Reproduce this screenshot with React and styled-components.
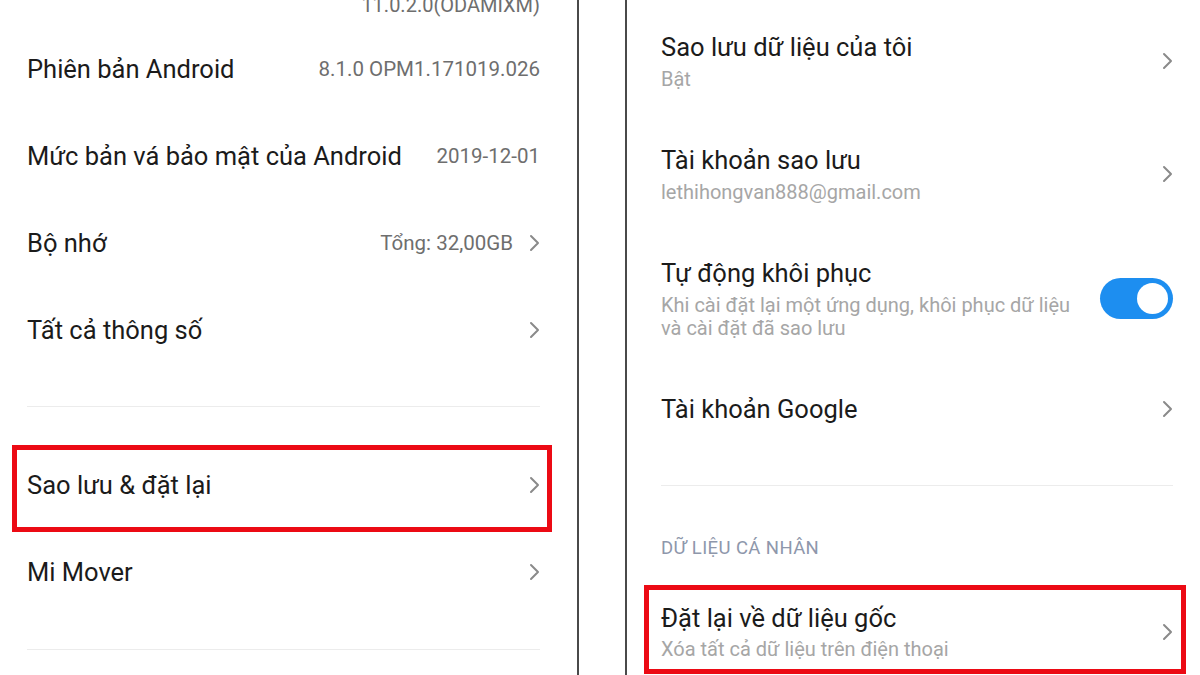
import React from "react";
import styled, { createGlobalStyle } from "styled-components";

const GlobalStyle = createGlobalStyle`
  html, body {
    margin: 0;
    padding: 0;
    background: #ffffff;
  }
  body {
    font-family: Roboto, "Noto Sans", "Liberation Sans", sans-serif;
    -webkit-font-smoothing: antialiased;
  }
`;

const Page = styled.div`
  width: 1200px;
  height: 675px;
  display: flex;
  overflow: hidden;
  background: #fff;
`;

const Screen = styled.section`
  position: relative;
  height: 675px;
  overflow: hidden;
  box-sizing: border-box;
  background: #fff;
  width: ${(p) => p.$width}px;
  border-left: ${(p) => (p.$edge === "left" ? "2px solid #4a4a4a" : "none")};
  border-right: ${(p) => (p.$edge === "right" ? "2px solid #4a4a4a" : "none")};
  padding: ${(p) => p.$pad};
`;

const Gutter = styled.div`
  width: 46px;
  flex: none;
`;

const Stub = styled.div`
  height: 25.5px;
  display: flex;
  justify-content: flex-end;
  align-items: flex-end;
  overflow: hidden;
`;

const StubValue = styled.span`
  font-size: 20px;
  line-height: 22px;
  color: #6e6e6e;
  margin-bottom: 10px;
`;

const Row = styled.div`
  position: relative;
  display: flex;
  align-items: center;
  justify-content: space-between;
  gap: 16px;
  padding: ${(p) => (p.$tall ? "26.75px" : "27.5px")} 0;

  ${(p) =>
    p.$box &&
    `
    &::after {
      content: "";
      position: absolute;
      inset: ${p.$box};
      border: 5px solid #ec0a14;
      pointer-events: none;
    }
  `}
`;

const TextBlock = styled.div`
  display: flex;
  flex-direction: column;
  min-width: 0;
`;

const Title = styled.div`
  font-size: 25.5px;
  line-height: 32px;
  color: #1b1b1b;
  white-space: nowrap;
`;

const Sub = styled.div`
  font-size: 20px;
  line-height: 23px;
  margin-top: 4.5px;
  color: #a6a6a6;
  max-width: ${(p) => (p.$narrow ? "430px" : "none")};
`;

const Trail = styled.div`
  display: flex;
  align-items: center;
  gap: 16px;
  flex: none;
`;

const Value = styled.span`
  font-size: 20.5px;
  color: #6e6e6e;
  white-space: nowrap;
`;

const Separator = styled.hr`
  border: none;
  height: 1px;
  background: #ececec;
  margin: ${(p) => p.$margin};
`;

const SectionLabel = styled.div`
  font-size: 18.5px;
  line-height: 24px;
  color: #8e97ab;
  letter-spacing: 0.4px;
  margin: 0 0 15.5px;
`;

const Toggle = styled.div`
  width: 73px;
  height: 41px;
  border-radius: 21px;
  background: #1d8ef0;
  display: flex;
  align-items: center;
  justify-content: flex-end;
  padding: 0 5px;
  box-sizing: border-box;
  flex: none;
`;

const Knob = styled.div`
  width: 31px;
  height: 31px;
  border-radius: 50%;
  background: #fff;
`;

const Chevron = () => (
  <svg width="11" height="18" viewBox="0 0 11 18" fill="none">
    <polyline
      points="2,2 9,9 2,16"
      stroke="#8a8a8a"
      strokeWidth="2"
      strokeLinecap="round"
      strokeLinejoin="round"
    />
  </svg>
);

const SettingRow = ({ title, sub, value, chevron, toggle, box, tall, narrow }) => (
  <Row $box={box} $tall={tall}>
    <TextBlock>
      <Title>{title}</Title>
      {sub && <Sub $narrow={narrow}>{sub}</Sub>}
    </TextBlock>
    <Trail>
      {value && <Value>{value}</Value>}
      {chevron && <Chevron />}
      {toggle && (
        <Toggle>
          <Knob />
        </Toggle>
      )}
    </Trail>
  </Row>
);

export default function App() {
  return (
    <Page>
      <GlobalStyle />
      <Screen $width={579} $edge="right" $pad="0 37px 0 27px">
        <Stub>
          <StubValue>11.0.2.0(ODAMIXM)</StubValue>
        </Stub>
        <SettingRow title="Phiên bản Android" value="8.1.0 OPM1.171019.026" />
        <SettingRow title="Mức bản vá bảo mật của Android" value="2019-12-01" />
        <SettingRow title="Bộ nhớ" value="Tổng: 32,00GB" chevron />
        <SettingRow title="Tất cả thông số" chevron />
        <Separator $margin="32px 0 35px" />
        <SettingRow
          title="Sao lưu & đặt lại"
          chevron
          box="3.5px -12px -3.5px -15px"
        />
        <SettingRow title="Mi Mover" chevron />
        <Separator $margin="33px 0 0" />
      </Screen>
      <Gutter />
      <Screen $width={575} $edge="left" $pad="4.5px 27px 0 34px">
        <SettingRow tall title="Sao lưu dữ liệu của tôi" sub="Bật" chevron />
        <SettingRow
          tall
          title="Tài khoản sao lưu"
          sub="lethihongvan888@gmail.com"
          chevron
        />
        <SettingRow
          tall
          narrow
          title="Tự động khôi phục"
          sub="Khi cài đặt lại một ứng dụng, khôi phục dữ liệu và cài đặt đã sao lưu"
          toggle
        />
        <SettingRow tall title="Tài khoản Google" chevron />
        <Separator $margin="32.5px 0 50px" />
        <SectionLabel>DỮ LIỆU CÁ NHÂN</SectionLabel>
        <SettingRow
          tall
          title="Đặt lại về dữ liệu gốc"
          sub="Xóa tất cả dữ liệu trên điện thoại"
          chevron
          box="9.5px -13px 14.5px -17px"
        />
      </Screen>
    </Page>
  );
}
